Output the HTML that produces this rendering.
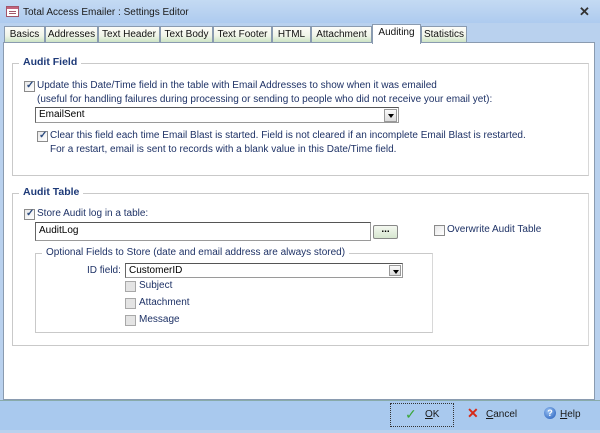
<!DOCTYPE html>
<html><head><style>
body{margin:0;width:600px;height:433px;background:#b9d1ee;font-family:"Liberation Sans",sans-serif;font-size:10px;color:#1e3266;position:relative;overflow:hidden}
div,span{position:absolute;box-sizing:border-box}
.t{white-space:nowrap}
.tab{top:26px;height:17px;border:1px solid #8a9bb0;border-bottom:none;background:linear-gradient(#fdfdf8 0,#f0f4e8 55%,#c7e1bf 100%);color:#111;font-size:10px;text-align:center;line-height:15px}
.grp{border:1px solid #c9c9c9;border-right-color:#d8d8d8}
.leg{background:#fff;padding:0 4px;font-weight:bold;color:#1e3a78;top:-8px;font-size:10.5px}
.cb{width:11px;height:11px;border:1px solid #8b8b8b;background:linear-gradient(135deg,#e8e8e8,#fff)}
.ck::after{content:"✓";position:absolute;left:1px;top:-2px;font-size:10px;color:#2b4a7e;font-weight:bold}
.dis{background:#e4e4e4;border-color:#a8a8a8}
.box{background:#fff;border:1px solid #9a9a9a;border-top-color:#555;border-left-color:#666;color:#000;padding-left:3px;line-height:14px}
.dd{width:13px;height:13px;right:1px;top:1px;border:1px solid #999;background:linear-gradient(#fafafa,#dcdcdc)}
.dd::after{content:"";position:absolute;left:3px;top:4px;border:3px solid transparent;border-top:4px solid #000}
</style></head><body>
<div style="left:0;top:0;width:600px;height:23px;background:linear-gradient(#c4daf3,#aecbef)"></div>
<div style="left:6px;top:6px;width:13px;height:11px;border:1px solid #a2566a;background:#fff"><div style="left:0;top:0;width:11px;height:2px;background:#c4637c"></div><div style="left:2px;top:4px;width:7px;height:1px;background:#a2566a"></div><div style="left:2px;top:6px;width:7px;height:1px;background:#a2566a"></div></div>
<div class="t" style="left:23px;top:7px;font-size:10px;color:#1a1a1a">Total Access Emailer : Settings Editor</div>
<div class="t" style="left:579px;top:4px;font-size:13px;color:#333;font-weight:bold">✕</div>

<div class="tab" style="left:4px;width:41px">Basics</div>
<div class="tab" style="left:45px;width:53px">Addresses</div>
<div class="tab" style="left:98px;width:62px">Text Header</div>
<div class="tab" style="left:160px;width:53px">Text Body</div>
<div class="tab" style="left:213px;width:59px">Text Footer</div>
<div class="tab" style="left:272px;width:39px">HTML</div>
<div class="tab" style="left:311px;width:61px">Attachment</div>
<div class="tab" style="left:421px;width:46px">Statistics</div>

<div style="left:3px;top:42px;width:592px;height:358px;background:#fff;border:1px solid #8a9bb0"></div>
<div class="tab" style="left:372px;top:24px;width:49px;height:20px;background:#fff;border-color:#8a9bb0;line-height:16px;z-index:2">Auditing</div>

<div class="grp" style="left:12px;top:63px;width:577px;height:113px"><span class="leg t" style="left:6px">Audit Field</span></div>
<div class="cb ck" style="left:24px;top:81px"></div>
<div class="t" style="left:37px;top:79px;line-height:14px">Update this Date/Time field in the table with Email Addresses to show when it was emailed<br>(useful for handling failures during processing or sending to people who did not receive your email yet):</div>
<div class="box t" style="left:35px;top:107px;width:364px;height:16px">EmailSent<div class="dd"></div></div>
<div class="cb ck" style="left:37px;top:131px"></div>
<div class="t" style="left:50px;top:129px;line-height:14px">Clear this field each time Email Blast is started. Field is not cleared if an incomplete Email Blast is restarted.<br>For a restart, email is sent to records with a blank value in this Date/Time field.</div>

<div class="grp" style="left:12px;top:193px;width:577px;height:153px"><span class="leg t" style="left:6px">Audit Table</span></div>
<div class="cb ck" style="left:24px;top:209px"></div>
<div class="t" style="left:37px;top:208px">Store Audit log in a table:</div>
<div class="box t" style="left:35px;top:222px;width:336px;height:19px;line-height:16px">AuditLog</div>
<div style="left:373px;top:225px;width:25px;height:14px;border:1px solid #888;border-radius:2px;background:linear-gradient(#f4f8f0,#d6e6cf);text-align:center;font-weight:bold;line-height:8px;color:#000">...</div>
<div class="cb" style="left:434px;top:225px"></div>
<div class="t" style="left:447px;top:224px">Overwrite Audit Table</div>

<div class="grp" style="left:35px;top:253px;width:398px;height:80px"><span class="t" style="left:6px;top:-7px;background:#fff;padding:0 4px">Optional Fields to Store (date and email address are always stored)</span></div>
<div class="t" style="left:87px;top:265px">ID field:</div>
<div class="box t" style="left:125px;top:263px;width:278px;height:15px;line-height:13px">CustomerID<div class="dd" style="height:11px;width:12px"></div></div>
<div class="cb dis" style="left:125px;top:281px"></div><div class="t" style="left:139px;top:280px">Subject</div>
<div class="cb dis" style="left:125px;top:298px"></div><div class="t" style="left:139px;top:297px">Attachment</div>
<div class="cb dis" style="left:125px;top:315px"></div><div class="t" style="left:139px;top:314px">Message</div>

<div style="left:0;top:400px;width:600px;height:30px;background:#a9c9ee;border-top:1px solid #8aa"></div>
<div style="left:390px;top:403px;width:64px;height:24px;border:1px dotted #333"></div>
<div class="t" style="left:405px;top:406px;font-size:14px;color:#3aa63a">✓</div>
<div class="t" style="left:425px;top:409px;color:#1a1a1a"><u>O</u>K</div>
<div class="t" style="left:467px;top:405px;font-size:14px;color:#d62a1a;font-weight:bold">✕</div>
<div class="t" style="left:486px;top:409px;color:#1a1a1a"><u>C</u>ancel</div>
<div style="left:544px;top:407px;width:12px;height:12px;border-radius:50%;background:radial-gradient(circle at 40% 35%,#9cc4f4,#1b56b8);color:#fff;font-size:9px;font-weight:bold;text-align:center;line-height:12px">?</div>
<div class="t" style="left:560px;top:409px;color:#1a1a1a"><u>H</u>elp</div>
</body></html>
